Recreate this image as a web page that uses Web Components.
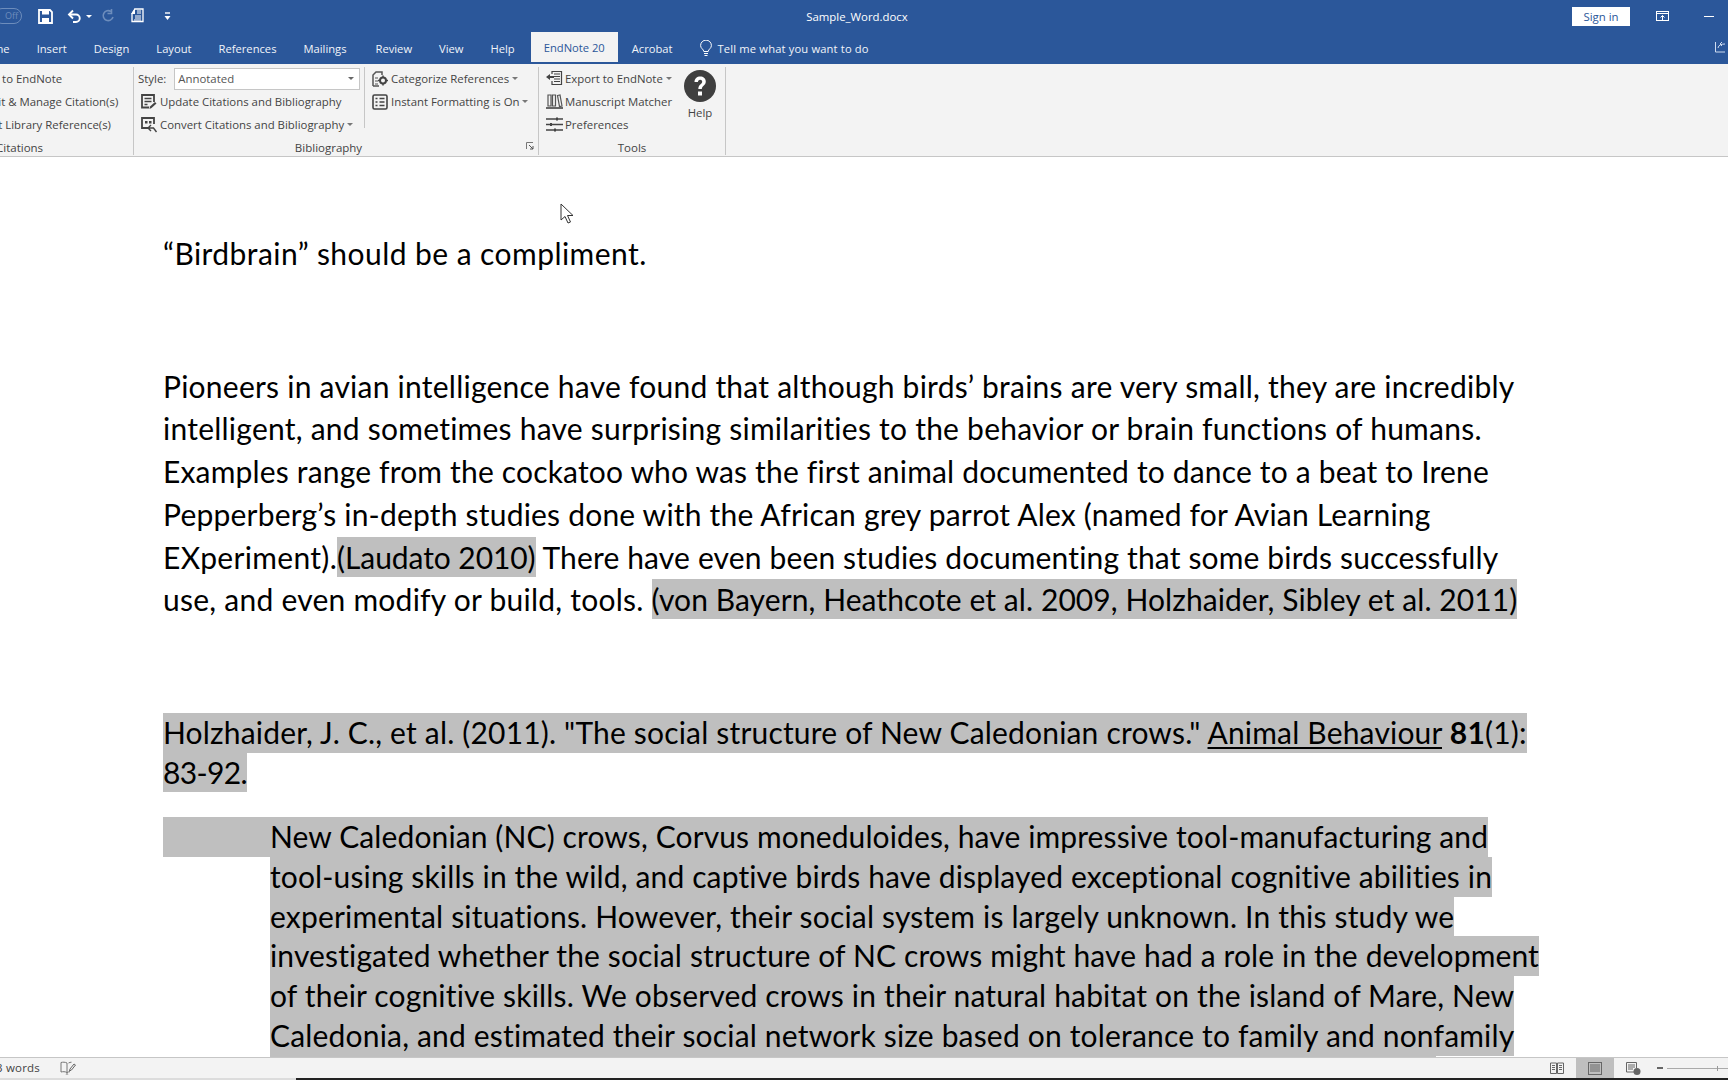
<!DOCTYPE html>
<html>
<head>
<meta charset="utf-8">
<title>Sample_Word.docx</title>
<style>
  html, body { margin: 0; height: 100%; overflow: hidden; background: #fff; }
</style>
</head>
<body>
<word-app></word-app>

<script>
const ICONS = {
  save: '<svg width="15" height="15" viewBox="0 0 15 15"><path d="M1 1h11l2 2v11H1z" fill="none" stroke="#fff" stroke-width="1.800"/><rect x="4" y="1" width="7" height="4.500" fill="#fff"/><rect x="4" y="9" width="7" height="5" fill="#fff"/></svg>',
  undo: '<svg width="15" height="15" viewBox="0 0 15 15"><path d="M6 1.500 2 5.500 6 9.500" fill="none" stroke="#fff" stroke-width="1.900"/><path d="M2.500 5.500h6.500a3.500 3.500 0 0 1 0 7.500H6" fill="none" stroke="#fff" stroke-width="1.900"/></svg>',
  redo: '<svg width="15" height="15" viewBox="0 0 15 15"><path d="M12 8a5 5 0 1 1-2-5.500" fill="none" stroke="#6d8dbc" stroke-width="1.600"/><path d="M10.500 0v4.500H6.500" fill="none" stroke="#6d8dbc" stroke-width="1.600"/></svg>',
  touch: '<svg width="15" height="16" viewBox="0 0 15 16"><path d="M5 1h8v12.500H2V6z" fill="none" stroke="#fff" stroke-width="1.300"/><path d="M5 0 1 6h4z" fill="#fff"/><path d="M5 8h6M5 10h6M4 12h7M7 5h4M7 3h4" stroke="#fff" stroke-width="1"/></svg>',
  more: '<svg width="7" height="9" viewBox="0 0 7 9"><path d="M1 1h5" stroke="#fff" stroke-width="1.400"/><path d="M.5 4h6L3.500 8z" fill="#fff"/></svg>',
  bulb: '<svg width="12" height="17" viewBox="0 0 12 17"><path d="M3.800 11.500C3.500 9 .6 8.500.6 5.500a5.400 5.400 0 0 1 10.800 0c0 3-2.900 3.500-3.200 6z" fill="none" stroke="#fff" stroke-width="1"/><path d="M4 13.500h4M4.500 15.500h3" stroke="#fff" stroke-width="1"/></svg>',
  update: '<svg width="16" height="16" viewBox="0 0 16 16"><path d="M8 13.500H1V1h12v7" fill="none" stroke="#444" stroke-width="1.800"/><path d="M3.500 4.500h7M3.500 7.500h7M3.500 10.500h3" stroke="#444" stroke-width="1.400"/><path d="M8.500 15l.5-2.500 5-4.500 1.500 1.500-5 4.500z" fill="#444"/></svg>',
  convert: '<svg width="17" height="16" viewBox="0 0 17 16"><path d="M7 11H1V1h12v6" fill="none" stroke="#444" stroke-width="1.800"/><path d="M4 4h2.500v2.500H4zM8 4h2.500v2.500H8z" fill="#444"/><path d="M10 8 7 11l3 3M7.500 11h5l3 4" fill="none" stroke="#444" stroke-width="1.400"/></svg>',
  categorize: '<svg width="16" height="17" viewBox="0 0 16 17"><path d="M1 16V5l3-3h6v3M1 16h6" fill="none" stroke="#555" stroke-width="1.500"/><path d="M3 8h3M3 11h3M3 14h3" stroke="#555" stroke-width="1.200"/><circle cx="11" cy="10.500" r="3" fill="none" stroke="#444" stroke-width="2"/><path d="M11 5.500v2M11 13.500v2M6 10.500h2M14 10.500h2" stroke="#444" stroke-width="1.500"/></svg>',
  format: '<svg width="16" height="16" viewBox="0 0 16 16"><rect x="1" y="1" width="14" height="14" rx="1.500" fill="none" stroke="#444" stroke-width="1.600"/><path d="M3.500 4.500h2M3.500 8h2M3.500 11.500h2M7.500 4.500h5M7.500 8h5M7.500 11.500h5" stroke="#444" stroke-width="1.600"/></svg>',
  exportRef: '<svg width="17" height="17" viewBox="0 0 17 17"><path d="M6 4V1.500h9.500v13H6V11" fill="none" stroke="#444" stroke-width="1.200"/><path d="M8 4h6M8 6.500h6M8 9h6M8 11.500h6" stroke="#444" stroke-width="1"/><path d="M4 4v2h4v2H4v2L0 7z" fill="#444"/></svg>',
  matcher: '<svg width="17" height="17" viewBox="0 0 17 17"><path d="M2 2h3v11H2zM6.500 2h3v11h-3z" fill="none" stroke="#555" stroke-width="1.200"/><path d="M11.500 2.500l2.500-.5 2 11-2.500.5z" fill="none" stroke="#555" stroke-width="1.200"/><path d="M0 15h17" stroke="#444" stroke-width="1.600"/></svg>',
  prefs: '<svg width="17" height="15" viewBox="0 0 17 15"><path d="M0 2h17M0 7.500h17M0 13h17" stroke="#444" stroke-width="1.300"/><path d="M10 .5h2v3h-2zM4 6h2v3H4zM8 11.500h2v3H8z" fill="#444"/></svg>',
  help: '<svg width="32" height="32" viewBox="0 0 32 32"><circle cx="16" cy="16" r="16" fill="#3f3f3f"/><path d="M10.500 12c0-3.500 2.500-5.500 5.700-5.500s5.600 2 5.600 5c0 4-4 4.300-4 7.500h-3.500c0-4.500 3.900-5 3.900-7.300 0-1.200-.8-2-2.100-2-1.400 0-2.100 1-2.200 2.300z" fill="#fff"/><rect x="14" y="21.500" width="4" height="4" fill="#fff"/></svg>',
  launcher: '<svg width="8" height="8" viewBox="0 0 8 8"><path d="M.5 7V.5H7" fill="none" stroke="#777"/><path d="M3 3l4 4M7 4v3H4" fill="none" stroke="#555"/></svg>',
  display: '<svg width="13" height="10" viewBox="0 0 13 10"><rect x=".5" y=".5" width="12" height="9" fill="none" stroke="#fff"/><path d="M1 2.500h11" stroke="#fff"/><path d="M6.500 9V4.500M4.500 6.500l2-2 2 2" fill="none" stroke="#fff"/></svg>',
  share: '<svg width="10" height="12" viewBox="0 0 10 12"><path d="M.5 1v10H10" fill="none" stroke="#cfdcf0"/><path d="M3 7c.5-3 3-4 7-4M7 1 5 3l2 2" fill="none" stroke="#cfdcf0"/></svg>',
  proof: '<svg width="16" height="14" viewBox="0 0 16 14"><path d="M7 2C5 1 3 1 1 1.500v9.500c2-.5 4-.5 6 .5 1-.5 2-.8 3-.8M7 2v10" fill="none" stroke="#777"/><path d="M8.500 2c1-.5 2-.8 3-.8" fill="none" stroke="#777"/><path d="M10 8l4-5 1.500 1-4 5-2 1z" fill="none" stroke="#666"/><path d="M7 12l-1.500 1.500h3z" fill="#777"/></svg>',
  read: '<svg width="14" height="13" viewBox="0 0 14 13"><path d="M.5 1h6v10.500h-6zM7.500 1h6v10.500h-6z" fill="none" stroke="#666"/><path d="M2 3.500h3M2 5.500h3M2 7.500h3M9 3.500h3M9 5.500h3M9 7.500h3" stroke="#666"/></svg>',
  print: '<svg width="14" height="13" viewBox="0 0 14 13"><rect x=".5" y=".5" width="13" height="12" fill="none" stroke="#666"/><path d="M2 3h10M2 5h10M2 7h10M2 9h10" stroke="#666"/></svg>',
  web: '<svg width="15" height="13" viewBox="0 0 15 13"><path d="M8 10H.5V.5h10V6" fill="none" stroke="#666"/><path d="M2 3h7M2 5h7M2 7h5" stroke="#666"/><circle cx="11" cy="9.500" r="3.500" fill="#666"/></svg>'
};

function icon(name) { return ICONS[name] || ''; }

class TitleBar extends HTMLElement {
  constructor() {
    super();
    this.attachShadow({ mode: 'open' });
    this.shadowRoot.innerHTML = `
      <style>
        :host { display: flex; align-items: center; height: 32px; background: #2b579a; color: #fff; font: 11.400px "Open Sans", sans-serif; position: relative; }
        .autosave { width: 23px; height: 14px; margin-left: -6px; border: 1px solid #6d8dbc; border-radius: 8px; color: #6d8dbc; font-size: 9px; line-height: 14px; text-align: right; padding-right: 3px; }
        .qat { display: flex; align-items: center; margin-left: 16px; }
        .caret { width: 0; height: 0; border: 3px solid transparent; border-top: 3px solid #fff; margin: 4px 0 0 4px; }
        .title { position: absolute; left: 0; width: 1714px; text-align: center; }
        .right { margin-left: auto; display: flex; align-items: center; margin-right: 14px; }
        .sign { background: #fff; color: #2b579a; width: 58px; height: 19px; line-height: 19px; text-align: center; margin-right: 26px; }
        .min { width: 10px; height: 1px; background: #fff; margin-left: 35px; }
      </style>
      <div class="autosave">Off</div>
      <div class="qat">
        ${icon('save')}
        <span style="width:14px"></span>${icon('undo')}<span class="caret"></span>
        <span style="width:9px"></span>${icon('redo')}
        <span style="width:14px"></span>${icon('touch')}
        <span style="width:19px"></span>${icon('more')}
      </div>
      <div class="title">Sample_Word.docx</div>
      <div class="right">
        <div class="sign">Sign in</div>
        ${icon('display')}
        <div class="min"></div>
      </div>`;
  }
}

class RibbonTabs extends HTMLElement {
  constructor() {
    super();
    this.attachShadow({ mode: 'open' });
    this.shadowRoot.innerHTML = `
      <style>
        :host { display: flex; align-items: stretch; height: 32px; background: #2b579a; color: #f1f4f9; font: 11.200px "Open Sans", sans-serif; overflow: hidden; }
        .tab { display: flex; align-items: center; margin-left: 27px; }
        .on { background: #f3f3f3; color: #2b579a; height: 30px; padding: 0 13px; margin-left: 16px; }
        .share { margin-left: auto; align-self: center; margin-right: -3px; }
        svg { margin-right: 6px; }
      </style>
      <span class="tab" style="margin-left:-22px">Home</span>
      <span class="tab">Insert</span>
      <span class="tab">Design</span>
      <span class="tab">Layout</span>
      <span class="tab">References</span>
      <span class="tab">Mailings</span>
      <span class="tab" style="margin-left:29px">Review</span>
      <span class="tab">View</span>
      <span class="tab">Help</span>
      <span class="tab on">EndNote 20</span>
      <span class="tab" style="margin-left:14px">Acrobat</span>
      <span class="tab" style="letter-spacing:.15px">${icon('bulb')}Tell me what you want to do</span>
      <span class="share">${icon('share')}</span>`;
  }
}

// one labelled command in the ribbon, the label comes through the slot
class RibbonCmd extends HTMLElement {
  constructor() {
    super();
    this.attachShadow({ mode: 'open' });
    const name = this.getAttribute('icon');
    this.shadowRoot.innerHTML = `
      <style>
        :host { display: flex; align-items: center; height: 23px; white-space: nowrap; }
        .ic { width: 22px; box-sizing: border-box; padding-left: 3px; display: flex; }
        .drop { width: 0; height: 0; border: 3px solid transparent; border-top: 3px solid #777; margin: 3px 0 0 3px; }
      </style>
      ${name ? `<span class="ic">${icon(name)}</span>` : ''}
      <slot></slot>
      ${this.hasAttribute('drop') ? '<span class="drop"></span>' : ''}`;
  }
}

class RibbonGroup extends HTMLElement {
  constructor() {
    super();
    this.attachShadow({ mode: 'open' });
    this.shadowRoot.innerHTML = `
      <style>
        :host { display: flex; flex-direction: column; height: 88px; border-right: 1px solid #c6c6c6; box-sizing: border-box; position: relative; flex: none; }
        .body { flex: 1; display: flex; min-height: 0; }
        .label { height: 15px; line-height: 15px; text-align: var(--label-align, center); color: #444; font-size: 11.500px; padding: var(--label-pad, 0); margin-left: var(--label-left, 0); white-space: nowrap; }
      </style>
      <div class="body"><slot></slot></div>
      <div class="label">${this.getAttribute('label')}</div>
      <slot name="extra"></slot>`;
  }
}

class DocLine extends HTMLElement {
  constructor() {
    super();
    this.attachShadow({ mode: 'open' });
    const sp = this.getAttribute('sp');
    this.shadowRoot.innerHTML = `
      <style>
        :host { display: block; white-space: nowrap; ${sp ? `letter-spacing: ${sp}px;` : ''} }
      </style>
      <slot></slot>`;
  }
}

class SelText extends HTMLElement {
  constructor() {
    super();
    this.attachShadow({ mode: 'open' });
    this.shadowRoot.innerHTML = `
      <style>
        :host { display: inline-block; background: #bfbfbf; line-height: var(--sel-h, 40px); }
      </style>
      <slot></slot>`;
  }
}

class StatusBar extends HTMLElement {
  constructor() {
    super();
    this.attachShadow({ mode: 'open' });
    this.shadowRoot.innerHTML = `
      <style>
        :host { display: flex; align-items: center; height: 20px; background: #f3f3f3; border-top: 1px solid #c6c6c6; color: #444; font: 11.500px "Open Sans", sans-serif; }
        .words { margin-left: -4px; width: 64px; letter-spacing: .2px; margin-top: -2px; }
        .right { margin-left: auto; display: flex; align-items: center; height: 100%; }
        .v { width: 38px; height: 100%; display: flex; align-items: center; justify-content: center; }
        .cur { background: #bfbfbf; }
        .minus { width: 6px; height: 2px; background: #666; margin-left: 5px; }
        .track { width: 61px; height: 1px; background: #aaa; margin-left: 4px; position: relative; }
        .track i { position: absolute; left: 50px; top: -2px; width: 1px; height: 5px; background: #999; }
      </style>
      <span class="words">3 words</span>
      ${icon('proof')}
      <div class="right">
        <span class="v">${icon('read')}</span>
        <span class="v cur">${icon('print')}</span>
        <span class="v">${icon('web')}</span>
        <span class="minus"></span>
        <span class="track"><i></i></span>
      </div>`;
  }
}

class WordApp extends HTMLElement {
  constructor() {
    super();
    this.attachShadow({ mode: 'open' });
    this.shadowRoot.innerHTML = `
      <style>
        :host { display: flex; flex-direction: column; height: 1080px; width: 1728px; overflow: hidden; background: #fff; position: relative; }
        .ribbon { display: flex; height: 93px; background: #f3f3f3; border-bottom: 1px solid #c6c6c6; box-sizing: border-box; padding-top: 3px; font: 11.400px "Open Sans", sans-serif; color: #444; flex: none; overflow: hidden; }
        .col { display: flex; flex-direction: column; }
        .citations { width: 134px; overflow: hidden; --label-align: left; --label-left: -4px; }
        .citations .col { margin-left: -18px; }
        .biblio { width: 405px; --label-pad: 0 15px 0 0; }
        .col-style { width: 230px; padding-left: 4px; box-sizing: border-box; }
        .tools { width: 187px; }
        .style { display: flex; align-items: center; height: 23px; }
        .combo { width: 186px; height: 22px; border: 1px solid #c6c6c6; background: #fff; margin-left: 8px; box-sizing: border-box; line-height: 20px; padding-left: 3px; position: relative; color: #555; }
        .combo i { position: absolute; right: 5px; top: 8px; border: 3px solid transparent; border-top: 3px solid #666; }
        .doc { flex: 1; min-height: 0; overflow: hidden; padding-left: 163px; font: 30px/42.700px Lato, "Open Sans", sans-serif; font-variant-ligatures: none; letter-spacing: .25px; color: #000; background: #fff; }
        .sep { width: 1px; height: 61px; background: #c6c6c6; flex: none; margin-right: 4px; }
        .help { width: 46px; display: flex; flex-direction: column; align-items: center; padding-top: 3px; }
        .help span { margin-top: 3px; }
        .launch { position: absolute; right: 4px; bottom: 2px; }
        .strip { height: 2px; flex: none; background: linear-gradient(90deg, #dcdcdc 296px, #222 296px); }
        .cursor { position: absolute; left: 560px; top: 203px; }
        u { text-decoration-thickness: 2px; text-underline-offset: 3px; }
        .bib { line-height: 39.700px; --sel-h: 39.700px; }
        .indent { padding-left: 107px; }
      </style>
      <title-bar></title-bar>
      <ribbon-tabs></ribbon-tabs>
      <div class="ribbon">
        <ribbon-group label="Citations" class="citations">
          <div class="col">
            <ribbon-cmd style="margin-left:2px">Go to EndNote</ribbon-cmd>
            <ribbon-cmd style="margin-left:3px">Edit &amp; Manage Citation(s)</ribbon-cmd>
            <ribbon-cmd>Edit Library Reference(s)</ribbon-cmd>
          </div>
        </ribbon-group>
        <ribbon-group label="Bibliography" class="biblio">
          <div class="col col-style">
            <div class="style">Style:<span class="combo">Annotated<i></i></span></div>
            <ribbon-cmd icon="update">Update Citations and Bibliography</ribbon-cmd>
            <ribbon-cmd icon="convert" drop>Convert Citations and Bibliography</ribbon-cmd>
          </div>
          <span class="sep"></span>
          <div class="col">
            <ribbon-cmd icon="categorize" drop>Categorize References</ribbon-cmd>
            <ribbon-cmd icon="format" drop>Instant Formatting is On</ribbon-cmd>
          </div>
          <span class="launch" slot="extra">${icon('launcher')}</span>
        </ribbon-group>
        <ribbon-group label="Tools" class="tools">
          <div class="col" style="padding-left:4px;width:138px;box-sizing:border-box">
            <ribbon-cmd icon="exportRef" drop>Export to EndNote</ribbon-cmd>
            <ribbon-cmd icon="matcher">Manuscript Matcher</ribbon-cmd>
            <ribbon-cmd icon="prefs">Preferences</ribbon-cmd>
          </div>
          <div class="help">${icon('help')}<span>Help</span></div>
        </ribbon-group>
      </div>
      <div class="doc">
        <div style="height:75px"></div>
        <doc-line sp=".44">“Birdbrain” should be a compliment.</doc-line>
        <div style="height:90px"></div>
        <doc-line sp=".24">Pioneers in avian intelligence have found that although birds’ brains are very small, they are incredibly</doc-line>
        <doc-line sp=".24">intelligent, and sometimes have surprising similarities to the behavior or brain functions of humans.</doc-line>
        <doc-line sp=".17">Examples range from the cockatoo who was the first animal documented to dance to a beat to Irene</doc-line>
        <doc-line sp=".2">Pepperberg’s in-depth studies done with the African grey parrot Alex (named for Avian Learning</doc-line>
        <doc-line sp=".15"><span style="letter-spacing:.33px">EXperiment).</span><sel-text style="letter-spacing:-.08px">(Laudato 2010)</sel-text> There have even been studies documenting that some birds successfully</doc-line>
        <doc-line sp=".13"><span style="letter-spacing:.245px">use, and even modify or build, tools. </span><sel-text style="letter-spacing:.08px">(von Bayern, Heathcote et al. 2009, Holzhaider, Sibley et al. 2011)</sel-text></doc-line>
        <div style="height:92px"></div>
        <div class="bib">
          <doc-line sp=".18"><sel-text>Holzhaider, J. C., et al. (2011). "The social structure of New Caledonian crows." <u>Animal Behaviour</u> <b>81</b>(1):</sel-text></doc-line>
          <doc-line sp="-.65"><sel-text>83-92.</sel-text></doc-line>
          <div style="height:25px"></div>
          <doc-line sp=".11"><sel-text><span class="indent">New Caledonian (NC) crows, Corvus moneduloides, have impressive tool-manufacturing and</span></sel-text></doc-line>
          <div class="indent">
            <doc-line sp=".135"><sel-text>tool-using skills in the wild, and captive birds have displayed exceptional cognitive abilities in</sel-text></doc-line>
            <doc-line sp=".18"><sel-text>experimental situations. However, their social system is largely unknown. In this study we</sel-text></doc-line>
            <doc-line sp=".13"><sel-text>investigated whether the social structure of NC crows might have had a role in the development</sel-text></doc-line>
            <doc-line sp=".17"><sel-text>of their cognitive skills. We observed crows in their natural habitat on the island of Mare, New</sel-text></doc-line>
            <doc-line sp=".18"><sel-text>Caledonia, and estimated their social network size based on tolerance to family and nonfamily</sel-text></doc-line>
            <doc-line><sel-text style="width:1166px">&nbsp;</sel-text></doc-line>
          </div>
        </div>
      </div>
      <status-bar></status-bar>
      <div class="strip"></div>
      <svg class="cursor" width="14" height="21" viewBox="0 0 14 21"><path d="M1 1v16l4-3.500 3 6.500 2.500-1-3-6.500H13z" fill="#fff" stroke="#333"/></svg>`;
  }
}

customElements.define('title-bar', TitleBar);
customElements.define('ribbon-tabs', RibbonTabs);
customElements.define('ribbon-cmd', RibbonCmd);
customElements.define('ribbon-group', RibbonGroup);
customElements.define('doc-line', DocLine);
customElements.define('sel-text', SelText);
customElements.define('status-bar', StatusBar);
customElements.define('word-app', WordApp);
</script>
</body>
</html>
